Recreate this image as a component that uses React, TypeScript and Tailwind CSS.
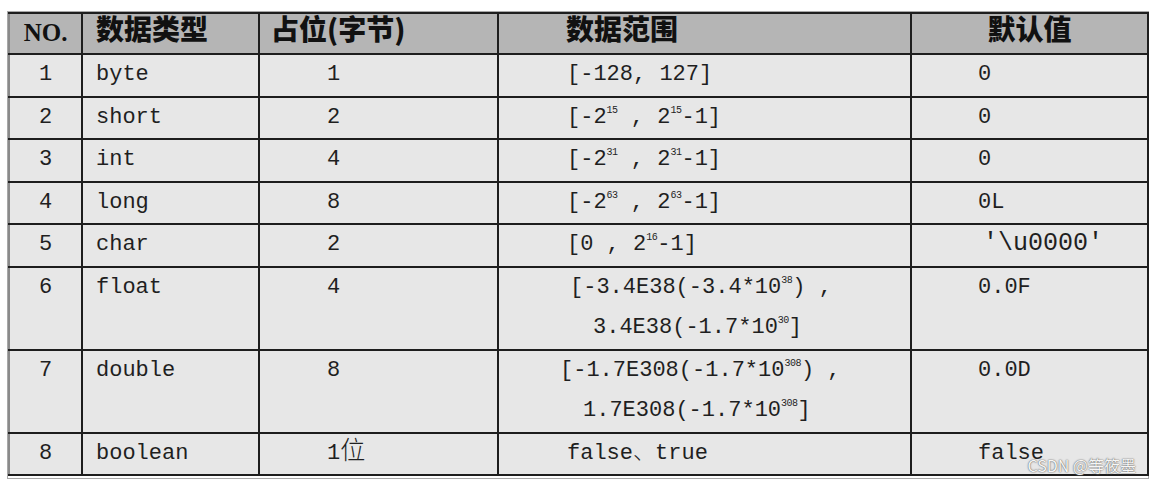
const mono = "font-['Liberation_Mono','Noto_Sans_CJK_SC',monospace]";
const head = "font-['Noto_Sans_CJK_SC',sans-serif] font-black text-[28px] leading-[28px] text-[#111]";

type Row = {
    no: string;
    type: string;
    size: React.ReactNode;
    range: React.ReactNode;
    def: React.ReactNode;
    h: string;
};

function Sup({ children }: { children: React.ReactNode }) {
    return (
        <sup className="relative -top-[10px] text-[10px] leading-none tracking-tighter">
            {children}
        </sup>
    );
}

const rows: Row[] = [
    { no: '1', type: 'byte', size: '1', range: '[-128, 127]', def: '0', h: 'h-[43px]' },
    {
        no: '2',
        type: 'short',
        size: '2',
        h: 'h-[42px]',
        range: (
            <>
                [-2<Sup>15</Sup> , 2<Sup>15</Sup>-1]
            </>
        ),
        def: '0',
    },
    {
        no: '3',
        type: 'int',
        size: '4',
        h: 'h-[43px]',
        range: (
            <>
                [-2<Sup>31</Sup> , 2<Sup>31</Sup>-1]
            </>
        ),
        def: '0',
    },
    {
        no: '4',
        type: 'long',
        size: '8',
        h: 'h-[42px]',
        range: (
            <>
                [-2<Sup>63</Sup> , 2<Sup>63</Sup>-1]
            </>
        ),
        def: '0L',
    },
    {
        no: '5',
        type: 'char',
        size: '2',
        h: 'h-[43px]',
        range: (
            <>
                [0 , 2<Sup>16</Sup>-1]
            </>
        ),
        def: <span className="pl-[5px] text-[25px] leading-none">'\u0000'</span>,
    },
    {
        no: '6',
        type: 'float',
        size: '4',
        h: 'h-[83px]',
        range: (
            <>
                <div className="pl-[3px]">
                    [-3.4E38(-3.4*10<Sup>38</Sup>) ,
                </div>
                <div className="pl-[26px]">
                    3.4E38(-1.7*10<Sup>30</Sup>]
                </div>
            </>
        ),
        def: '0.0F',
    },
    {
        no: '7',
        type: 'double',
        size: '8',
        h: 'h-[83px]',
        range: (
            <>
                <div className="-ml-[7px]">
                    [-1.7E308(-1.7*10<Sup>308</Sup>) ,
                </div>
                <div className="pl-[16px]">
                    1.7E308(-1.7*10<Sup>308</Sup>]
                </div>
            </>
        ),
        def: '0.0D',
    },
    {
        no: '8',
        type: 'boolean',
        h: 'h-[42px]',
        size: (
            <>
                1
                <span className="font-['Noto_Sans_CJK_SC'] text-[25px] font-light leading-none">
                    位
                </span>
            </>
        ),
        range: (
            <>
                false
                <span className="font-['Noto_Sans_CJK_SC'] font-light leading-none">、</span>
                true
            </>
        ),
        def: 'false',
    },
];

const cell = 'border-2 border-[#1e1e1e] p-0 align-top';

export default function App() {
    return (
        <div className="min-h-[481px] w-[1152px] bg-white pl-[7px] pt-[11px]">
            <div className="relative w-[1142px] border border-[#a8a8a8] pb-[2px] pr-[1px]">
                <table className="w-[1139px] table-fixed border-collapse bg-[#e7e7e7] text-[#1f1f1f]">
                    <colgroup>
                        <col className="w-[73px]" />
                        <col className="w-[177px]" />
                        <col className="w-[239px]" />
                        <col className="w-[413px]" />
                        <col className="w-[237px]" />
                    </colgroup>
                    <thead>
                        <tr className="h-[41px] bg-[#b5b5b5]">
                            <th className={`${cell} border-l-[#8a8a8a] text-center align-middle font-['Liberation_Serif',serif] text-[25px] font-bold text-[#111]`}>
                                NO.
                            </th>
                            <th className={`${cell} pl-[13px] align-middle text-left ${head}`}>数据类型</th>
                            <th className={`${cell} pl-[11px] align-middle text-left ${head}`}>占位(字节)</th>
                            <th className={`${cell} pl-[67px] align-middle text-left ${head}`}>数据范围</th>
                            <th className={`${cell} align-middle text-center ${head}`}>默认值</th>
                        </tr>
                    </thead>
                    <tbody className={`${mono} text-[22px] leading-[40px]`}>
                        {rows.map((r) => (
                            <tr key={r.no} className={r.h}>
                                <td className={`${cell} border-l-[#8a8a8a] text-center`}>{r.no}</td>
                                <td className={`${cell} pl-[13px]`}>{r.type}</td>
                                <td className={`${cell} pl-[67px]`}>{r.size}</td>
                                <td className={`${cell} pl-[68px] whitespace-nowrap`}>{r.range}</td>
                                <td className={`${cell} pl-[66px]`}>{r.def}</td>
                            </tr>
                        ))}
                    </tbody>
                </table>
                <span className="absolute bottom-[5px] right-[12px] font-['Noto_Sans_CJK_SC',sans-serif] text-[16px] leading-none text-[#f6f6f6] [text-shadow:0_0_1px_#555,0_0_2px_#888]">
                    CSDN @等筱墨
                </span>
            </div>
        </div>
    );
}
